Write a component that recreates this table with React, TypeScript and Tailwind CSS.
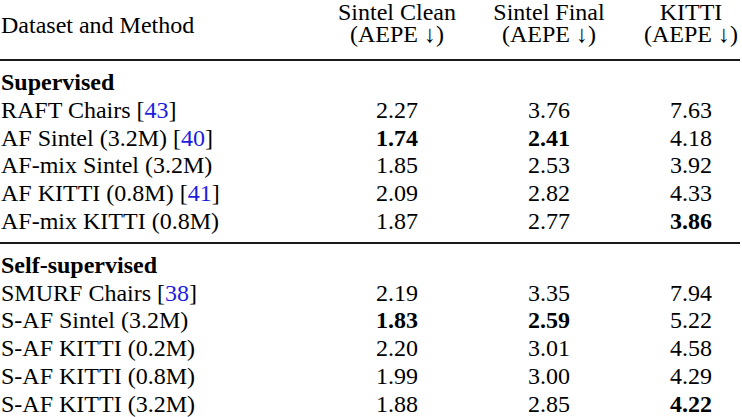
import React from "react";

type Row = {
  name: string;
  cite?: string;
  vals: [string, string, string];
  bold?: [boolean, boolean, boolean];
};

const supervised: Row[] = [
  { name: "RAFT Chairs ", cite: "43", vals: ["2.27", "3.76", "7.63"] },
  { name: "AF Sintel (3.2M) ", cite: "40", vals: ["1.74", "2.41", "4.18"], bold: [true, true, false] },
  { name: "AF-mix Sintel (3.2M)", vals: ["1.85", "2.53", "3.92"] },
  { name: "AF KITTI (0.8M) ", cite: "41", vals: ["2.09", "2.82", "4.33"] },
  { name: "AF-mix KITTI (0.8M)", vals: ["1.87", "2.77", "3.86"], bold: [false, false, true] },
];

const selfSupervised: Row[] = [
  { name: "SMURF Chairs ", cite: "38", vals: ["2.19", "3.35", "7.94"] },
  { name: "S-AF Sintel (3.2M)", vals: ["1.83", "2.59", "5.22"], bold: [true, true, false] },
  { name: "S-AF KITTI (0.2M)", vals: ["2.20", "3.01", "4.58"] },
  { name: "S-AF KITTI (0.8M)", vals: ["1.99", "3.00", "4.29"] },
  { name: "S-AF KITTI (3.2M)", vals: ["1.88", "2.85", "4.22"], bold: [false, false, true] },
];

const cols = "grid grid-cols-[336px_122px_182px_102px]";

const Section = ({ title, rows }: { title: string; rows: Row[] }) => (
  <div className="flex flex-col leading-[27.8px]">
    <div className="pl-[1px] font-bold">{title}</div>
    {rows.map((r) => (
      <div key={r.name} className={cols}>
        <div className="pl-[1px] whitespace-pre">
          {r.name}
          {r.cite && (
            <>
              [<span className="text-[#1d1de0]">{r.cite}</span>]
            </>
          )}
        </div>
        {r.vals.map((v, i) => (
          <div key={i} className={`text-center ${r.bold?.[i] ? "font-bold" : ""}`}>
            {v}
          </div>
        ))}
      </div>
    ))}
  </div>
);

export default function App() {
  return (
    <div className="w-[742px] h-[417px] overflow-hidden bg-white text-black text-[24px] [font-family:'Liberation_Serif','Times_New_Roman',serif]">
      <div className={`${cols} pt-[1px] leading-[22px]`}>
        <div className="pl-[1px] self-center pt-[4px] whitespace-nowrap">Dataset and Method</div>
        <div className="text-center whitespace-nowrap">
          Sintel Clean
          <br />
          (AEPE ↓)
        </div>
        <div className="text-center whitespace-nowrap">
          Sintel Final
          <br />
          (AEPE ↓)
        </div>
        <div className="text-center whitespace-nowrap">
          KITTI
          <br />
          (AEPE ↓)
        </div>
      </div>
      <div className="mt-[14px] h-[2px] w-[740px] bg-[#1a1a1a]" />
      <div className="mt-[8px]">
        <Section title="Supervised" rows={supervised} />
      </div>
      <div className="mt-[6px] h-[2px] w-[740px] bg-[#1a1a1a]" />
      <div className="mt-[8px]">
        <Section title="Self-supervised" rows={selfSupervised} />
      </div>
    </div>
  );
}
